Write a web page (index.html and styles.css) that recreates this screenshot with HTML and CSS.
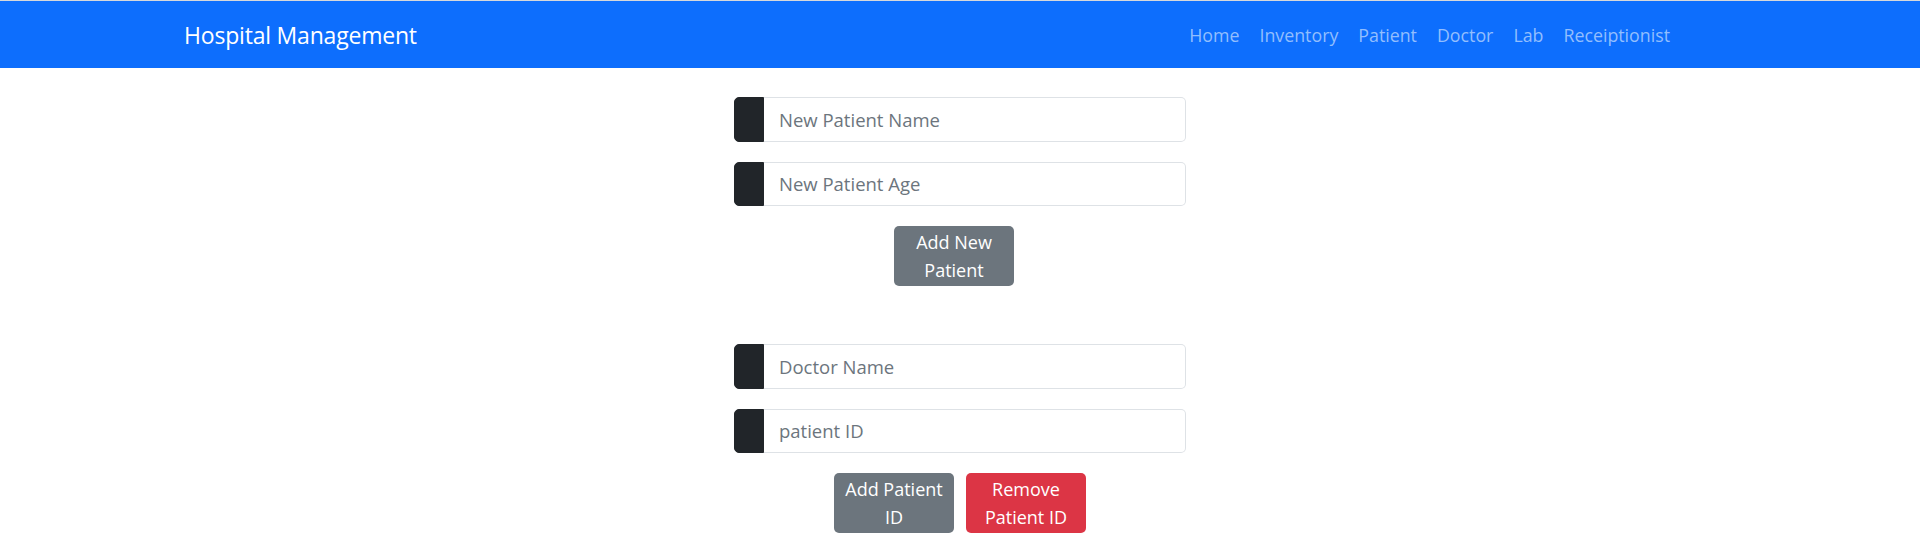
FILE: index.html
```html
<!DOCTYPE html>
<html lang="en">
<head>
    <meta charset="UTF-8">
    <meta name="viewport" content="width=device-width, initial-scale=1.0">
    <title>Hospital Management</title>
    <link rel="stylesheet" href="styles.css">
</head>
<body>
    <nav class="navbar">
        <div class="navbar-inner">
            <a class="navbar-brand" href="#">Hospital Management</a>
            <ul class="nav-links">
                <li><a href="#">Home</a></li>
                <li><a href="#">Inventory</a></li>
                <li><a href="#">Patient</a></li>
                <li><a href="#">Doctor</a></li>
                <li><a href="#">Lab</a></li>
                <li><a href="#">Receiptionist</a></li>
            </ul>
        </div>
    </nav>

    <main class="content">
        <section class="form-block">
            <div class="input-group">
                <span class="input-addon"></span>
                <input type="text" placeholder="New Patient Name">
            </div>
            <div class="input-group">
                <span class="input-addon"></span>
                <input type="text" placeholder="New Patient Age">
            </div>
            <div class="actions actions-single">
                <button class="btn btn-secondary">Add New Patient</button>
            </div>
        </section>

        <section class="form-block">
            <div class="input-group">
                <span class="input-addon"></span>
                <input type="text" placeholder="Doctor Name">
            </div>
            <div class="input-group">
                <span class="input-addon"></span>
                <input type="text" placeholder="patient ID">
            </div>
            <div class="actions">
                <button class="btn btn-secondary">Add Patient ID</button>
                <button class="btn btn-danger">Remove Patient ID</button>
            </div>
        </section>
    </main>
</body>
</html>
```

FILE: styles.css
```css
body {
    margin: 0;
    font-family: "Open Sans", "Noto Sans", sans-serif;
    color: #212529;
    background-color: #fff;
    border-top: 1px solid #d6d8db;
}

.navbar {
    background-color: #0d6efd;
    height: 67px;
}

.navbar-inner {
    display: flex;
    align-items: center;
    height: 100%;
    padding: 0 240px 0 184px;
}

.navbar-brand {
    color: #fff;
    font-size: 23px;
    text-decoration: none;
    letter-spacing: -0.2px;
}

.nav-links {
    display: flex;
    list-style: none;
    margin: 0 0 0 auto;
    padding: 0;
}

.nav-links a {
    display: block;
    padding: 0 10px;
    color: rgb(146, 190, 254);
    font-size: 17.8px;
    text-decoration: none;
}

.content {
    display: flex;
    flex-direction: column;
    align-items: center;
    padding-top: 29px;
    gap: 58px;
}

.form-block {
    display: flex;
    flex-direction: column;
    gap: 20px;
    width: 452px;
}

.input-group {
    display: flex;
    height: 44.5px;
}

.input-addon {
    width: 30px;
    background-color: #212529;
    border: 1px solid #212529;
    border-radius: 5px 0 0 5px;
    box-sizing: border-box;
}

.input-group input {
    flex: 1;
    min-width: 0;
    margin: 0;
    padding: 0 15px;
    border: 1px solid #dee2e6;
    border-left: none;
    border-radius: 0 5px 5px 0;
    font-family: inherit;
    font-size: 18.5px;
    color: #212529;
    outline: none;
}

.input-group input::placeholder {
    color: #6c757d;
}

.actions {
    display: flex;
    justify-content: center;
    gap: 12px;
}

.actions-single {
    padding-right: 12px;
}

.btn {
    width: 120px;
    height: 60px;
    padding: 2px 8px;
    border: none;
    border-radius: 5px;
    color: #fff;
    font-family: inherit;
    font-size: 18px;
    line-height: 28px;
    cursor: pointer;
}

.btn-secondary {
    background-color: #6c757d;
}

.btn-danger {
    background-color: #dc3545;
}
```
